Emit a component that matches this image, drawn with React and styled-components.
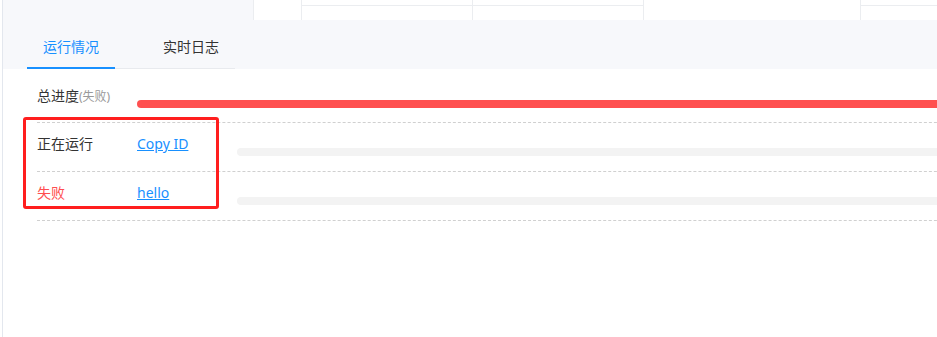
import React from 'react';
import styled, { createGlobalStyle } from 'styled-components';

const GlobalStyle = createGlobalStyle`
  html, body {
    margin: 0;
    padding: 0;
    overflow: hidden;
    background: #fff;
  }
  body {
    font-family: "Noto Sans", "Noto Sans CJK SC", sans-serif;
    font-size: 14px;
    color: #333;
  }
`

const Page = styled.div`
  height: 337px;
  margin-left: 2px;
  border-left: 1px solid #e3e7ee;
  position: relative;
  overflow: hidden;
`

const TableTail = styled.div`
  display: grid;
  grid-template-columns: 250px 48px 171px 171px 217px 1fr;
  height: 20px;
`

const Cell = styled.div`
  background: ${p => (p.$muted ? '#f7f8fb' : '#fff')};
  border-left: ${p => (p.$muted ? 'none' : '1px solid #ebedf0')};
  background-image: ${p => (p.$split ? 'linear-gradient(#ebedf0, #ebedf0)' : 'none')};
  background-size: 100% 1px;
  background-position: 0 5px;
  background-repeat: no-repeat;
`

const TabBar = styled.div`
  background: #f7f8fb;
  height: 49px;
  padding-left: 24px;
  display: flex;
  align-items: flex-end;
`

const TabNav = styled.div`
  display: flex;
  gap: 32px;
  border-bottom: 1px solid #e8eaee;
`

const Tab = styled.div`
  padding: 9px 16px 9px;
  line-height: 22px;
  font-size: 14px;
  color: ${p => (p.$active ? '#1890ff' : '#333')};
  border-bottom: 2px solid ${p => (p.$active ? '#1890ff' : 'transparent')};
  margin-bottom: -1px;
`

const Content = styled.div`
  position: relative;
  padding-left: 34px;
  margin-right: -40px;
`

const Row = styled.div`
  display: grid;
  grid-template-columns: ${p => (p.$total ? '100px 1fr' : '100px 100px 1fr')};
  align-items: end;
  padding: ${p => (p.$total ? '16px 0 14px' : '10px 0 16px')};
  border-bottom: 1px dashed #d0d0d0;
`

const Label = styled.span`
  line-height: 22px;
  font-size: 14px;
  color: ${p => (p.$failed ? '#ff4d4f' : '#333')};
`

const Hint = styled.span`
  font-size: 12px;
  color: #999;
`

const Link = styled.a`
  line-height: 22px;
  font-size: 14px;
  color: #1890ff;
  text-decoration: underline;
  cursor: pointer;
`

const Bar = styled.div`
  height: 8px;
  border-radius: 4px;
  background: ${p => p.$color};
  margin-bottom: ${p => (p.$total ? '0' : '-1px')};
`

const Highlight = styled.div`
  position: absolute;
  left: 20px;
  top: 48px;
  width: 190px;
  height: 86px;
  border: 3px solid #ff1e1e;
  border-radius: 3px;
  pointer-events: none;
`

const tasks = [
  { status: '正在运行', link: 'Copy ID' },
  { status: '失败', link: 'hello', failed: true },
]

export default function App() {
  return (
    <>
      <GlobalStyle />
      <Page>
        <TableTail>
          <Cell $muted />
          <Cell />
          <Cell $split />
          <Cell $split />
          <Cell />
          <Cell $split />
        </TableTail>
        <TabBar>
          <TabNav>
            <Tab $active>运行情况</Tab>
            <Tab>实时日志</Tab>
          </TabNav>
        </TabBar>
        <Content>
          <Row $total>
            <Label>总进度<Hint>(失败)</Hint></Label>
            <Bar $total $color="#ff5050" />
          </Row>
          {tasks.map(t => (
            <Row key={t.link}>
              <Label $failed={t.failed}>{t.status}</Label>
              <Link>{t.link}</Link>
              <Bar $color="#f3f3f3" />
            </Row>
          ))}
          <Highlight />
        </Content>
      </Page>
    </>
  )
}
